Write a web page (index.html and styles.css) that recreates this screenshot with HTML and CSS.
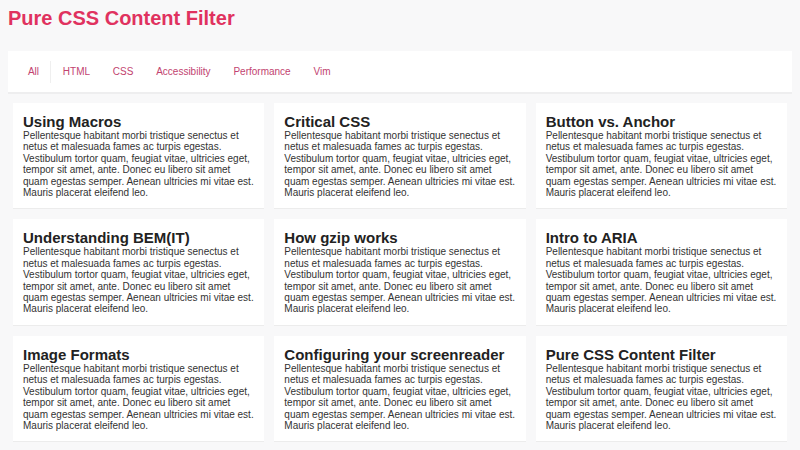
FILE: index.html
```html
<!DOCTYPE html>
<html lang="en">
<head>
    <meta charset="UTF-8">
    <meta name="viewport" content="width=device-width, initial-scale=1.0">
    <title>Pure CSS Content Filter</title>
    <link rel="stylesheet" href="styles.css">
</head>
<body>
    <h1 class="title">Pure CSS Content Filter</h1>

    <nav class="filters">
        <a class="filter filter-all" href="#">All</a>
        <a class="filter" href="#">HTML</a>
        <a class="filter" href="#">CSS</a>
        <a class="filter" href="#">Accessibility</a>
        <a class="filter" href="#">Performance</a>
        <a class="filter" href="#">Vim</a>
    </nav>

    <div class="posts">
        <article class="post">
            <h3>Using Macros</h3>
            <p>Pellentesque habitant morbi tristique senectus et netus et malesuada fames ac turpis egestas. Vestibulum tortor quam, feugiat vitae, ultricies eget, tempor sit amet, ante. Donec eu libero sit amet quam egestas semper. Aenean ultricies mi vitae est. Mauris placerat eleifend leo.</p>
        </article>
        <article class="post">
            <h3>Critical CSS</h3>
            <p>Pellentesque habitant morbi tristique senectus et netus et malesuada fames ac turpis egestas. Vestibulum tortor quam, feugiat vitae, ultricies eget, tempor sit amet, ante. Donec eu libero sit amet quam egestas semper. Aenean ultricies mi vitae est. Mauris placerat eleifend leo.</p>
        </article>
        <article class="post">
            <h3>Button vs. Anchor</h3>
            <p>Pellentesque habitant morbi tristique senectus et netus et malesuada fames ac turpis egestas. Vestibulum tortor quam, feugiat vitae, ultricies eget, tempor sit amet, ante. Donec eu libero sit amet quam egestas semper. Aenean ultricies mi vitae est. Mauris placerat eleifend leo.</p>
        </article>
        <article class="post">
            <h3>Understanding BEM(IT)</h3>
            <p>Pellentesque habitant morbi tristique senectus et netus et malesuada fames ac turpis egestas. Vestibulum tortor quam, feugiat vitae, ultricies eget, tempor sit amet, ante. Donec eu libero sit amet quam egestas semper. Aenean ultricies mi vitae est. Mauris placerat eleifend leo.</p>
        </article>
        <article class="post">
            <h3>How gzip works</h3>
            <p>Pellentesque habitant morbi tristique senectus et netus et malesuada fames ac turpis egestas. Vestibulum tortor quam, feugiat vitae, ultricies eget, tempor sit amet, ante. Donec eu libero sit amet quam egestas semper. Aenean ultricies mi vitae est. Mauris placerat eleifend leo.</p>
        </article>
        <article class="post">
            <h3>Intro to ARIA</h3>
            <p>Pellentesque habitant morbi tristique senectus et netus et malesuada fames ac turpis egestas. Vestibulum tortor quam, feugiat vitae, ultricies eget, tempor sit amet, ante. Donec eu libero sit amet quam egestas semper. Aenean ultricies mi vitae est. Mauris placerat eleifend leo.</p>
        </article>
        <article class="post">
            <h3>Image Formats</h3>
            <p>Pellentesque habitant morbi tristique senectus et netus et malesuada fames ac turpis egestas. Vestibulum tortor quam, feugiat vitae, ultricies eget, tempor sit amet, ante. Donec eu libero sit amet quam egestas semper. Aenean ultricies mi vitae est. Mauris placerat eleifend leo.</p>
        </article>
        <article class="post">
            <h3>Configuring your screenreader</h3>
            <p>Pellentesque habitant morbi tristique senectus et netus et malesuada fames ac turpis egestas. Vestibulum tortor quam, feugiat vitae, ultricies eget, tempor sit amet, ante. Donec eu libero sit amet quam egestas semper. Aenean ultricies mi vitae est. Mauris placerat eleifend leo.</p>
        </article>
        <article class="post">
            <h3>Pure CSS Content Filter</h3>
            <p>Pellentesque habitant morbi tristique senectus et netus et malesuada fames ac turpis egestas. Vestibulum tortor quam, feugiat vitae, ultricies eget, tempor sit amet, ante. Donec eu libero sit amet quam egestas semper. Aenean ultricies mi vitae est. Mauris placerat eleifend leo.</p>
        </article>
    </div>
</body>
</html>
```

FILE: styles.css
```css
body {
    background: #f8f8f9;
    font-family: "Liberation Sans", Arial, sans-serif;
    color: #333;
    margin: 0;
    padding: 7px 8px 0 8px;
}
.title {
    color: #e0325f;
    font-size: 20px;
    line-height: 23px;
    margin: 0 0 21px 0;
}
.filters {
    display: flex;
    align-items: center;
    background: white;
    padding: 9.5px 8.5px;
    border-bottom: 2px solid #eeeeef;
}
.filter {
    color: #c2436f;
    text-decoration: none;
    font-size: 10px;
    line-height: 12px;
    padding: 5px 11.4px;
}
.filter-all {
    border-right: 1px solid #efefef;
}
.posts {
    display: flex;
    flex-wrap: wrap;
    margin-top: 4px;
}
.post {
    box-sizing: border-box;
    width: calc(33.333% - 10px);
    margin: 5px;
    padding: 10px;
    background: white;
    border-bottom: 1px solid #ececec;
}
.post h3 {
    color: #222;
    font-size: 15px;
    line-height: 17px;
    margin: 0;
}
.post p {
    font-size: 10px;
    line-height: 11.4px;
    margin: 0;
}
```
